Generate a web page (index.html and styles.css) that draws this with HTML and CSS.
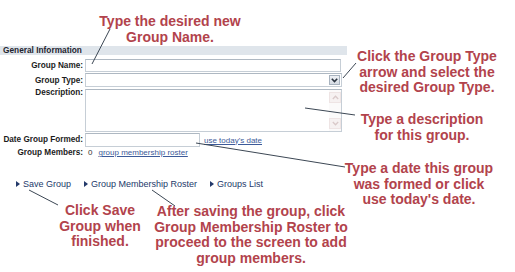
FILE: index.html
```html
<!DOCTYPE html>
<html>
<head>
<meta charset="utf-8">
<link rel="stylesheet" href="styles.css">
</head>
<body>
<div class="page">
  <div class="form">
    <div class="section-head">General Information</div>
    <div class="fields">
      <div class="label">Group Name:</div>
      <div class="field name-input"></div>
      <div class="label">Group Type:</div>
      <div class="field select">
        <span class="select-btn">
          <svg width="7" height="5" viewBox="0 0 7 5"><path d="M0.8 0.8 L3.5 3.6 L6.2 0.8" fill="none" stroke="#2b3440" stroke-width="1.6"/></svg>
        </span>
      </div>
      <div class="label label-top">Description:</div>
      <div class="field textarea">
        <span class="scroll">
          <span class="sb-btn"><svg width="7" height="5" viewBox="0 0 7 5"><path d="M0.8 4 L3.5 1.2 L6.2 4" fill="none" stroke="#d9c9c9" stroke-width="1.3"/></svg></span>
          <span class="sb-btn"><svg width="7" height="5" viewBox="0 0 7 5"><path d="M0.8 1 L3.5 3.8 L6.2 1" fill="none" stroke="#d9c9c9" stroke-width="1.3"/></svg></span>
        </span>
      </div>
      <div class="label">Date Group Formed:</div>
      <div class="value-row">
        <div class="field date-input"></div>
        <a class="small-link date-link">use today's date</a>
      </div>
      <div class="label">Group Members:</div>
      <div class="value-row members">
        <span class="count">0</span>
        <a class="small-link">group membership roster</a>
      </div>
    </div>
  </div>

  <div class="actions">
    <a class="action"><span class="tri"></span>Save Group</a>
    <a class="action"><span class="tri"></span>Group Membership Roster</a>
    <a class="action"><span class="tri"></span>Groups List</a>
  </div>

  <svg class="leaders" width="515" height="272" viewBox="0 0 515 272">
    <g stroke="#3c4754" stroke-width="1" fill="none">
      <line x1="110" y1="29" x2="92" y2="64"/>
      <line x1="343" y1="78" x2="356" y2="63"/>
      <line x1="305" y1="108" x2="355" y2="115"/>
      <line x1="196" y1="143" x2="345" y2="167"/>
      <line x1="29" y1="190" x2="58" y2="205"/>
      <line x1="152" y1="190" x2="175" y2="206"/>
    </g>
  </svg>

  <div class="note n1">Type the desired new<br>Group Name.</div>
  <div class="note n2">Click the Group Type<br>arrow and select the<br>desired Group Type.</div>
  <div class="note n3">Type a description<br>for this group.</div>
  <div class="note n4">Type a date this group<br>was formed or click<br>use today's date.</div>
  <div class="note n5">Click Save<br>Group when<br>finished.</div>
  <div class="note n6">After saving the group, click<br>Group Membership Roster to<br>proceed to the screen to add<br>group members.</div>
</div>
</body>
</html>
```

FILE: styles.css
```css
html, body {
  margin: 0;
  padding: 0;
  background: #ffffff;
}

.page {
  position: relative;
  width: 515px;
  height: 272px;
  overflow: hidden;
  font-family: "Liberation Sans", Arial, sans-serif;
  color: #222;
}

.form {
  padding-top: 46px;
}

.section-head {
  width: 344px;
  height: 9px;
  padding-left: 3px;
  margin-bottom: 4px;
  background: #dfe5eb;
  font-size: 8.3px;
  font-weight: bold;
  line-height: 9px;
  color: #1f2530;
}

.fields {
  display: grid;
  grid-template-columns: 83px 258px;
  grid-template-rows: 13px 15px 43px 14px 10px;
  column-gap: 2px;
  row-gap: 1px;
}

.label {
  font-size: 8.2px;
  font-weight: bold;
  text-align: right;
  align-self: center;
  line-height: 10px;
  color: #1c1c1c;
  white-space: nowrap;
}

.label-top {
  align-self: start;
  margin-top: -1px;
}

.field {
  box-sizing: border-box;
  background: #fff;
  border: 1px solid #c6ced6;
  border-top-color: #aeb8c2;
}

.name-input {
  width: 256px;
  height: 13px;
}

.select {
  width: 257px;
  height: 14px;
  display: flex;
  justify-content: flex-end;
  align-items: stretch;
  padding: 1px;
}

.select-btn {
  width: 11px;
  display: flex;
  align-items: center;
  justify-content: center;
  background: linear-gradient(#eef1f5, #d6dce4);
  border: 1px solid #a8b3bf;
  box-sizing: border-box;
}

.textarea {
  width: 257px;
  height: 43px;
  display: flex;
  justify-content: flex-end;
}

.scroll {
  width: 12px;
  display: flex;
  flex-direction: column;
  justify-content: space-between;
  padding: 2px 0;
  background: #fbfafa;
}

.sb-btn {
  height: 9px;
  display: flex;
  align-items: center;
  justify-content: center;
  background: #f6f1f1;
  border: 1px solid #eee4e4;
}

.value-row {
  display: flex;
  align-items: center;
  gap: 4px;
}

.date-input {
  width: 115px;
  height: 14px;
}

.small-link {
  font-size: 8px;
  color: #3c5a99;
  text-decoration: underline;
  line-height: 10px;
}

.date-link {
  margin-top: 1px;
}

.members {
  gap: 0;
  font-size: 8px;
  line-height: 10px;
}

.count {
  margin-left: 3px;
  margin-right: 6px;
  color: #333;
}

.actions {
  display: flex;
  gap: 13px;
  padding-left: 16px;
  margin-top: 20px;
  height: 12px;
  align-items: center;
}

.action {
  display: flex;
  align-items: center;
  font-size: 9px;
  color: #23396a;
  white-space: nowrap;
}

.tri {
  width: 0;
  height: 0;
  border-top: 3px solid transparent;
  border-bottom: 3px solid transparent;
  border-left: 4px solid #23396a;
  margin-right: 3px;
}

.leaders {
  position: absolute;
  left: 0;
  top: 0;
}

.note {
  position: absolute;
  font-size: 14px;
  font-weight: bold;
  line-height: 15.5px;
  color: #b2434c;
  text-align: center;
  white-space: nowrap;
}

.n1 { left: 70px;  top: 14px;  width: 200px; }
.n2 { left: 347px; top: 49px;  width: 160px; }
.n3 { left: 342px; top: 112px; width: 160px; }
.n4 { left: 334px; top: 161px; width: 170px; }
.n5 { left: 50px;  top: 203px; width: 100px; }
.n6 { left: 146px; top: 204px; width: 210px; }
```
